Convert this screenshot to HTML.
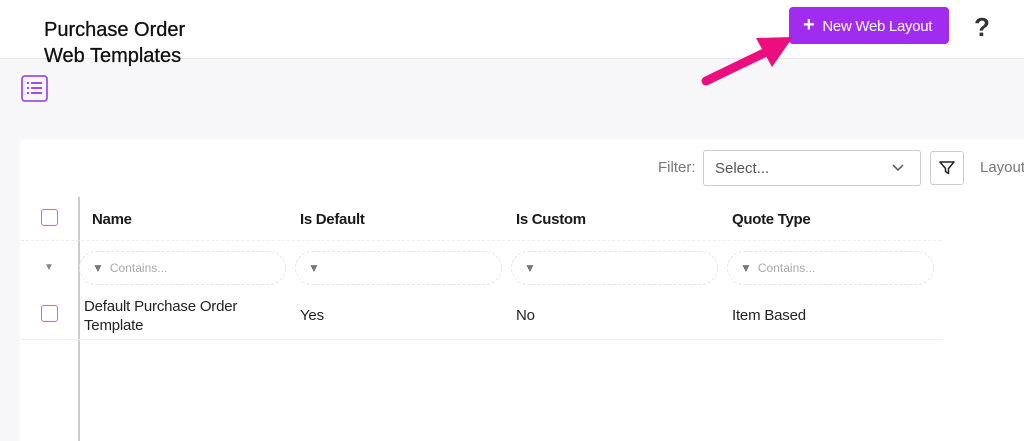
<!DOCTYPE html><html><head><style>
body{margin:0;width:1024px;height:441px;overflow:hidden;background:#f7f7f9;font-family:"Liberation Sans",sans-serif;position:relative}
.a{position:absolute}
.hdr{left:0;top:0;width:1024px;height:58px;background:#fff;border-bottom:1px solid #e6e6ea}
.title{left:44px;top:17px;font-size:20px;line-height:26px;color:#111;-webkit-text-stroke:0.3px #111}
.btn{left:789px;top:7px;width:160px;height:37px;background:#a12cf0;border-radius:4px;color:#fff;font-size:15px;line-height:37px;text-indent:14px;letter-spacing:-0.3px}
.card{left:20px;top:139px;width:1004px;height:302px;background:#fff;border-radius:6px 0 0 0}
.th{font-size:15px;font-weight:bold;color:#1a1a1a;top:211px;letter-spacing:-0.3px}
.td{font-size:15px;color:#222;letter-spacing:-0.2px}
.pill{top:251px;height:32px;border:1px dashed #e4e4e4;border-radius:17px;font-size:12px;color:#aaa;line-height:32px}
.cb{width:15px;height:15px;border:1.5px solid #b56ef2;border-radius:3px;box-sizing:content-box}
</style></head><body>
<div class="a hdr"></div>
<div class="a title">Purchase Order<br>Web Templates</div>
<div class="a btn"><b style="font-size:20px;margin-right:8px">+</b>New Web Layout</div>
<div class="a" style="left:974px;top:12px;font-size:26px;font-weight:bold;color:#333">?</div>
<svg class="a" style="left:21px;top:75px" width="27" height="27" viewBox="0 0 27 27"><rect x="1" y="1" width="25" height="25" rx="3" fill="none" stroke="#a14cf0" stroke-width="1.8"/><g fill="#a14cf0"><rect x="6" y="7" width="2" height="2"/><rect x="6" y="12" width="2" height="2"/><rect x="6" y="17" width="2" height="2"/><rect x="10" y="7" width="11" height="2"/><rect x="10" y="12" width="11" height="2"/><rect x="10" y="17" width="11" height="2"/></g></svg>
<svg class="a" style="left:690px;top:25px" width="120" height="70"><line x1="16" y1="56" x2="74" y2="28" stroke="#ec0d7f" stroke-width="9" stroke-linecap="round"/><polygon points="66,13 103,12 82,42" fill="#ec0d7f"/></svg>
<div class="a card"></div>
<div class="a" style="left:658px;top:159px;font-size:15px;color:#777">Filter:</div>
<div class="a" style="left:703px;top:150px;width:216px;height:34px;border:1px solid #ccc;border-radius:3px;background:#fff"><span class="a" style="left:11px;top:9px;font-size:15px;color:#555">Select...</span><svg class="a" style="left:188px;top:13px" width="12" height="8"><path d="M1 1l5 5 5-5" fill="none" stroke="#555" stroke-width="1.5"/></svg></div>
<div class="a" style="left:930px;top:151px;width:32px;height:32px;border:1px solid #ccc;border-radius:3px;background:#fff"><svg class="a" style="left:8px;top:8px" width="16" height="16"><path d="M1 2h14l-5.5 6.5v5l-3-2v-3z" fill="none" stroke="#222" stroke-width="1.5" stroke-linejoin="round"/></svg></div>
<div class="a" style="left:980px;top:159px;font-size:15px;color:#777">Layout</div>
<div class="a" style="left:78px;top:197px;width:2px;height:244px;background:#ccc"></div>
<div class="a cb" style="left:41px;top:209px"></div>
<div class="a th" style="left:92px">Name</div>
<div class="a th" style="left:300px">Is Default</div>
<div class="a th" style="left:516px">Is Custom</div>
<div class="a th" style="left:732px">Quote Type</div>
<div class="a" style="left:21px;top:240px;width:920px;border-top:1px dashed #eee"></div>
<div class="a" style="left:44px;top:262px;font-size:10px;color:#888">▼</div>
<div class="a pill" style="left:79px;width:205px"><span style="color:#777;margin:0 6px 0 12px">▼</span>Contains...</div>
<div class="a pill" style="left:295px;width:205px"><span style="color:#777;margin:0 6px 0 12px">▼</span></div>
<div class="a pill" style="left:511px;width:205px"><span style="color:#777;margin:0 6px 0 12px">▼</span></div>
<div class="a pill" style="left:727px;width:205px"><span style="color:#777;margin:0 6px 0 12px">▼</span>Contains...</div>
<div class="a cb" style="left:41px;top:305px"></div>
<div class="a td" style="left:84px;top:297px;line-height:19px">Default Purchase Order<br>Template</div>
<div class="a td" style="left:300px;top:307px">Yes</div>
<div class="a td" style="left:516px;top:307px">No</div>
<div class="a td" style="left:732px;top:307px">Item Based</div>
<div class="a" style="left:21px;top:339px;width:922px;border-top:1px solid #eee"></div>
</body></html>
